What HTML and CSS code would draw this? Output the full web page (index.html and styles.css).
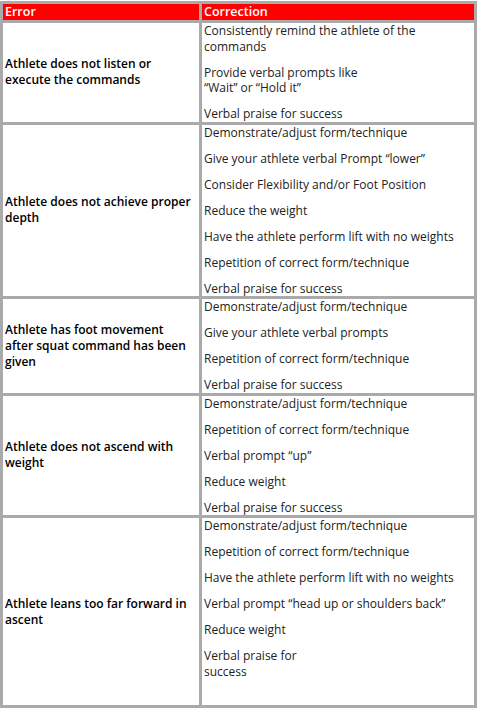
FILE: index.html
```html
<!DOCTYPE html>
<html>
<head>
<meta charset="utf-8">
<link rel="stylesheet" href="styles.css">
</head>
<body>
<table class="errors">
  <thead>
    <tr><th class="col-error">Error</th><th class="col-fix">Correction</th></tr>
  </thead>
  <tbody>
    <tr>
      <td class="err">Athlete does not listen or execute the commands</td>
      <td class="fix">
        <p>Consistently remind the athlete of the commands</p>
        <p>Provide verbal prompts like<br>“Wait” or “Hold it”</p>
        <p>Verbal praise for success</p>
      </td>
    </tr>
    <tr>
      <td class="err">Athlete does not achieve proper depth</td>
      <td class="fix">
        <p>Demonstrate/adjust form/technique</p>
        <p>Give your athlete verbal Prompt “lower”</p>
        <p>Consider Flexibility and/or Foot Position</p>
        <p>Reduce the weight</p>
        <p>Have the athlete perform lift with no weights</p>
        <p>Repetition of correct form/technique</p>
        <p>Verbal praise for success</p>
      </td>
    </tr>
    <tr>
      <td class="err">Athlete has foot movement after squat command has been given</td>
      <td class="fix">
        <p>Demonstrate/adjust form/technique</p>
        <p>Give your athlete verbal prompts</p>
        <p>Repetition of correct form/technique</p>
        <p>Verbal praise for success</p>
      </td>
    </tr>
    <tr>
      <td class="err">Athlete does not ascend with weight</td>
      <td class="fix">
        <p>Demonstrate/adjust form/technique</p>
        <p>Repetition of correct form/technique</p>
        <p>Verbal prompt “up”</p>
        <p>Reduce weight</p>
        <p>Verbal praise for success</p>
      </td>
    </tr>
    <tr>
      <td class="err">Athlete leans too far forward in ascent</td>
      <td class="fix fix-last">
        <p>Demonstrate/adjust form/technique</p>
        <p>Repetition of correct form/technique</p>
        <p>Have the athlete perform lift with no weights</p>
        <p>Verbal prompt “head up or shoulders back”</p>
        <p>Reduce weight</p>
        <p>Verbal praise for<br>success</p>
      </td>
    </tr>
  </tbody>
</table>
</body>
</html>
```
FILE: styles.css
```css
html, body {
  margin: 0;
  padding: 0;
  background: #fff;
}
body {
  padding: 1px 0 0 0;
  font-family: "Open Sans", "DejaVu Sans", sans-serif;
  font-size: 12px;
  color: #111;
}
.errors {
  border-collapse: collapse;
  width: 477px;
  border: 3px solid #aaa;
  table-layout: fixed;
}
.errors th, .errors td {
  border: 3px solid #aaa;
  padding: 0 2px;
  text-align: left;
}
.errors th {
  background: #ff0000;
  color: #fff;
  font-weight: 600;
  font-size: 12.5px;
  height: 16px;
  line-height: 16px;
  padding-top: 0;
  padding-bottom: 0;
}
.col-error { width: 192px; }
.col-fix { width: auto; }
.err {
  vertical-align: middle;
  font-weight: 600;
  line-height: 16px;
  color: #000;
}
.errors td.err {
  padding-right: 5px;
}
.fix {
  vertical-align: top;
  line-height: 15.5px;
  color: #222;
}
.fix p {
  margin: 0 0 10.5px 0;
}
.fix p:last-child {
  margin-bottom: 0;
}
.errors td.fix-last {
  padding-bottom: 26px;
}
```
